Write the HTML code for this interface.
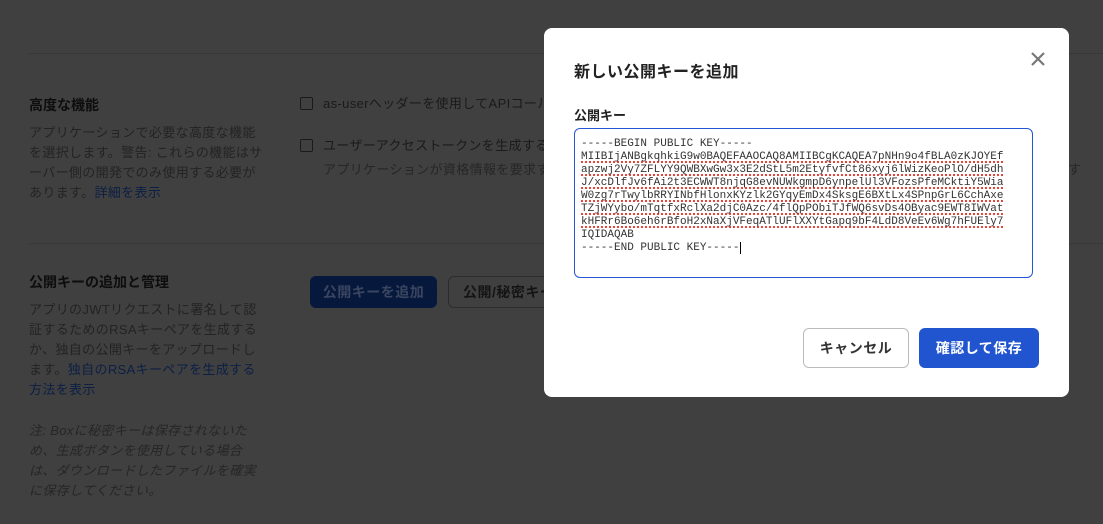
<!DOCTYPE html>
<html><head><meta charset="utf-8"><style>
*{box-sizing:border-box;margin:0;padding:0}
body{width:1103px;height:524px;background:#404040;font-family:"Liberation Sans","Noto Sans CJK JP",sans-serif;position:relative;overflow:hidden}
.a{position:absolute}
.h{font-size:14px;font-weight:bold;color:#0d0d0d}
.p{font-size:13px;line-height:20px;color:#232323;white-space:nowrap;letter-spacing:0.35px}
.lk{color:#0c1f45}
.cb{width:13px;height:13px;border:1px solid #1a1a1a;border-radius:2px}
.ln{height:1px;background:#383838}
.modal{left:544px;top:28px;width:525px;height:369px;background:#fff;border-radius:8px}
.ta{left:574px;top:128px;width:459px;height:150px;border:1px solid #2456d6;border-radius:6px;padding:9px 6px;font-family:"Liberation Mono",monospace;font-size:11px;line-height:13px;color:#333;white-space:pre}
.u{text-decoration:underline dotted #e8443a;text-decoration-thickness:1.5px;text-underline-offset:2px}
.btn{font-size:14px;font-weight:bold;border-radius:6px;display:flex;align-items:center;justify-content:center;letter-spacing:0.5px}
</style></head><body>
<div class="a ln" style="left:29px;top:53px;width:1074px"></div>
<div class="a h" style="left:29px;top:95px">高度な機能</div>
<div class="a p" style="left:29px;top:123px">アプリケーションで必要な高度な機能<br>を選択します。警告: これらの機能はサ<br>ーバー側の開発でのみ使用する必要が<br>あります。<span class="lk">詳細を表示</span></div>
<div class="a cb" style="left:300px;top:97px"></div>
<div class="a p" style="left:323px;top:94px;color:#1a1a1a">as-userヘッダーを使用してAPIコール</div>
<div class="a cb" style="left:300px;top:139px"></div>
<div class="a p" style="left:323px;top:136px;color:#1a1a1a">ユーザーアクセストークンを生成する</div>
<div class="a p" style="left:323px;top:160px;color:#262626">アプリケーションが資格情報を要求す</div>
<div class="a p" style="left:1068px;top:160px;color:#262626">す</div>
<div class="a ln" style="left:29px;top:243px;width:1074px"></div>
<div class="a h" style="left:29px;top:272px">公開キーの追加と管理</div>
<div class="a p" style="left:29px;top:300px">アプリのJWTリクエストに署名して認<br>証するためのRSAキーペアを生成する<br>か、独自の公開キーをアップロードし<br>ます。<span class="lk">独自のRSAキーペアを生成する<br>方法を表示</span></div>
<div class="a p" style="left:29px;top:421px;font-style:italic;color:#262626">注: Boxに秘密キーは保存されないた<br>め、生成ボタンを使用している場合<br>は、ダウンロードしたファイルを確実<br>に保存してください。</div>
<div class="a btn" style="left:310px;top:276px;width:127px;height:32px;background:#07183d;color:#3a4560">公開キーを追加</div>
<div class="a btn" style="left:448px;top:276px;width:110px;height:32px;border:1px solid #2c2c2c;color:#141414;justify-content:flex-start;padding-left:14px">公開/秘密キー</div>

<div class="a modal"></div>
<div class="a" style="left:574px;top:58px;font-size:16px;font-weight:bold;color:#222;letter-spacing:0.5px">新しい公開キーを追加</div>
<svg class="a" style="left:1031px;top:52px" width="14" height="14" viewBox="0 0 14 14"><path d="M1 1L13 13M13 1L1 13" stroke="#777" stroke-width="2.2"/></svg>
<div class="a" style="left:574px;top:105px;font-size:13px;font-weight:bold;color:#222">公開キー</div>
<div class="a ta">-----BEGIN PUBLIC KEY-----
<span class="u">MIIBIjANBgkqhkiG9w0BAQEFAAOCAQ8AMIIBCgKCAQEA7pNHn9o4fBLA0zKJOYEf</span>
<span class="u">apzwj2Vy7ZFLYY9QWBXwGw3x3E2dStL5m2EtyfvfCt86xyj6lWizKeoPlO/dH5dh</span>
<span class="u">J/xcDlfJv6fAi2t3ECWWT8njqG8evNUWkgmpD6ynpelUl3VFozsPfeMCktiY5Wia</span>
<span class="u">W0zg7rTwylbRRYINbfHlonxKYzlk2GYqyEmDx4SksgE6BXtLx4SPnpGrL6CchAxe</span>
<span class="u">TZjWYybo/mTqtfxRclXa2djC0Azc/4flQpPObiTJfWQ6svDs4OByac9EWT8IWVat</span>
<span class="u">kHFRr6Bo6eh6rBfoH2xNaXjVFeqATlUFlXXYtGapq9bF4LdD8VeEv6Wg7hFUEly7</span>
IQIDAQAB
-----END PUBLIC KEY-----<span style="border-left:1px solid #000;margin-left:1px"></span></div>
<div class="a btn" style="left:803px;top:328px;width:106px;height:40px;border:1px solid #bbb;color:#333">キャンセル</div>
<div class="a btn" style="left:919px;top:328px;width:120px;height:40px;background:#2155d0;color:#fff">確認して保存</div>
</body></html>
